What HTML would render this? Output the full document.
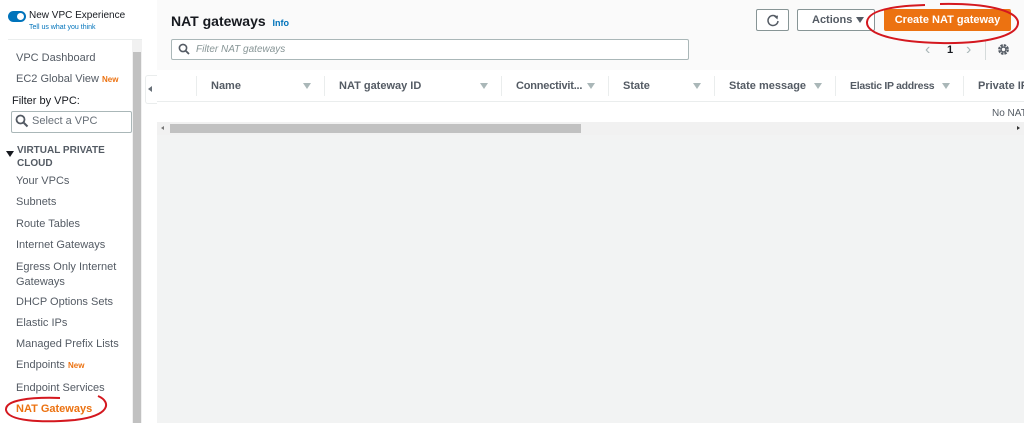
<!DOCTYPE html>
<html><head><meta charset="utf-8"><style>
*{box-sizing:border-box;margin:0;padding:0}
body{width:1024px;height:423px;overflow:hidden;background:#f2f3f3;font-family:"Liberation Sans",Arial,sans-serif;position:relative;color:#16191f}
.abs{position:absolute}
.side{left:0;top:0;width:142px;height:423px;background:#fff}
.nav{position:absolute;left:16px;font-size:11px;color:#545b64;white-space:nowrap}
.new{color:#ec7211;font-size:8px;font-weight:bold}
.th{position:absolute;top:80px;font-size:11px;font-weight:bold;color:#545b64;white-space:nowrap}
.tri{position:absolute;top:83px;width:0;height:0;border-left:4px solid transparent;border-right:4px solid transparent;border-top:6px solid #aab7b8}
.sep{position:absolute;top:76px;width:1px;height:20px;background:#eaeded}
</style></head><body>
<div class="abs side">
  <div class="abs" style="left:8px;top:11px;width:18px;height:11px;border-radius:6px;background:#0073bb"></div>
  <div class="abs" style="left:17px;top:13px;width:7px;height:7px;border-radius:50%;background:#fff"></div>
  <div class="abs" style="left:29px;top:10px;font-size:10px;color:#16191f">New VPC Experience</div>
  <div class="abs" style="left:29px;top:24px;font-size:7px;color:#0073bb">Tell us what you think</div>
  <div class="abs" style="left:8px;top:39px;width:150px;height:1px;background:#eaeded"></div>
  <div class="nav" style="top:52px">VPC Dashboard</div>
  <div class="nav" style="top:73px">EC2 Global View <span class="new">New</span></div>
  <div class="nav" style="left:12px;top:95px;color:#16191f">Filter by VPC:</div>
  <div class="abs" style="left:11px;top:111px;width:121px;height:22px;border:1px solid #aab7b8;border-radius:2px;background:#fff"></div>
  <svg class="abs" style="left:15px;top:114px" width="14" height="14"><circle cx="5.5" cy="5.5" r="4" fill="none" stroke="#545b64" stroke-width="1.8"/><line x1="8.5" y1="8.5" x2="12.5" y2="12.5" stroke="#545b64" stroke-width="2"/></svg>
  <div class="nav" style="left:32px;top:115px;font-size:11px;color:#687078">Select a VPC</div>
  <div class="abs" style="left:6px;top:151px;width:0;height:0;border-left:4px solid transparent;border-right:4px solid transparent;border-top:6px solid #16191f"></div>
  <div class="abs" style="left:17px;top:144px;font-size:10px;font-weight:bold;color:#545b64;line-height:13px">VIRTUAL PRIVATE<br>CLOUD</div>
  <div class="nav" style="top:175px">Your VPCs</div>
  <div class="nav" style="top:196px">Subnets</div>
  <div class="nav" style="top:218px">Route Tables</div>
  <div class="nav" style="top:239px">Internet Gateways</div>
  <div class="nav" style="top:260px;line-height:15px">Egress Only Internet<br>Gateways</div>
  <div class="nav" style="top:296px">DHCP Options Sets</div>
  <div class="nav" style="top:317px">Elastic IPs</div>
  <div class="nav" style="top:338px">Managed Prefix Lists</div>
  <div class="nav" style="top:359px">Endpoints <span class="new">New</span></div>
  <div class="nav" style="top:382px">Endpoint Services</div>
  <div class="nav" style="top:403px;color:#ec7211;font-weight:bold">NAT Gateways</div>
</div>
<div class="abs" style="left:132px;top:40px;width:10px;height:383px;background:#f1f1f1"></div>
<div class="abs" style="left:133px;top:52px;width:8px;height:371px;background:#c1c1c1"></div>
<div class="abs" style="left:142px;top:0;width:15px;height:423px;background:#fff"></div>
<div class="abs" style="left:145px;top:75px;width:13px;height:29px;background:#fff;border:1px solid #eaeded;border-right:none;border-radius:3px 0 0 3px"></div>
<div class="abs" style="left:148px;top:86px;border-top:3px solid transparent;border-bottom:3px solid transparent;border-right:4px solid #687078"></div>
<!-- main header -->
<div class="abs" style="left:157px;top:0;width:867px;height:70px;background:#fafafa"></div>
<div class="abs" style="left:171px;top:13px;font-size:14px;font-weight:bold">NAT gateways <span style="font-size:9px;color:#0073bb;margin-left:3px">Info</span></div>
<div class="abs" style="left:171px;top:39px;width:518px;height:21px;border:1px solid #aab7b8;border-radius:2px;background:#fff"></div>
<svg class="abs" style="left:178px;top:43px" width="13" height="13"><circle cx="5" cy="5" r="3.6" fill="none" stroke="#545b64" stroke-width="1.6"/><line x1="7.7" y1="7.7" x2="11" y2="11" stroke="#545b64" stroke-width="1.8"/></svg>
<div class="abs" style="left:196px;top:44px;font-size:10px;font-style:italic;color:#879596">Filter NAT gateways</div>
<!-- buttons -->
<div class="abs" style="left:756px;top:9px;width:33px;height:22px;border:1px solid #879596;border-radius:2px;background:#fff"></div>
<svg class="abs" style="left:766px;top:13px" width="14" height="14"><path d="M11 4.5A5 5 0 1 0 12 8" fill="none" stroke="#545b64" stroke-width="1.5"/><path d="M8 3.5L12 2.5L11.5 6.5Z" fill="#545b64"/></svg>
<div class="abs" style="left:797px;top:9px;width:78px;height:22px;border:1px solid #879596;border-radius:2px;background:#fff"></div>
<div class="abs" style="left:812px;top:14px;font-size:11px;font-weight:bold;color:#545b64">Actions</div>
<div class="abs" style="left:856px;top:17px;border-left:4px solid transparent;border-right:4px solid transparent;border-top:6px solid #545b64"></div>
<div class="abs" style="left:884px;top:9px;width:127px;height:22px;background:#ec7211;border-radius:2px"></div>
<div class="abs" style="left:884px;top:14px;width:127px;text-align:center;font-size:11px;font-weight:bold;color:#fff">Create NAT gateway</div>
<div class="abs" style="left:925px;top:41px;font-size:16px;color:#aab7b8">&#8249;</div>
<div class="abs" style="left:947px;top:44px;font-size:11px;font-weight:bold">1</div>
<div class="abs" style="left:966px;top:41px;font-size:16px;color:#aab7b8">&#8250;</div>
<div class="abs" style="left:985px;top:40px;width:1px;height:20px;background:#d5dbdb"></div>
<svg class="abs" style="left:997px;top:43px" width="13" height="13"><circle cx="6.5" cy="6.5" r="4.3" fill="none" stroke="#545b64" stroke-width="2.2" stroke-dasharray="2.4 1"/><circle cx="6.5" cy="6.5" r="2.4" fill="none" stroke="#545b64" stroke-width="1.4"/></svg>
<!-- table -->
<div class="abs" style="left:157px;top:70px;width:867px;height:52px;background:#fff"></div>
<div class="abs" style="left:157px;top:101px;width:867px;height:1px;background:#eaeded"></div>
<div class="sep" style="left:196px"></div>
<div class="th" style="left:211px">Name</div><div class="tri" style="left:303px"></div>
<div class="sep" style="left:324px"></div>
<div class="th" style="left:339px">NAT gateway ID</div><div class="tri" style="left:480px"></div>
<div class="sep" style="left:501px"></div>
<div class="th" style="left:516px;letter-spacing:-0.2px">Connectivit...</div><div class="tri" style="left:587px"></div>
<div class="sep" style="left:608px"></div>
<div class="th" style="left:623px">State</div><div class="tri" style="left:693px"></div>
<div class="sep" style="left:714px"></div>
<div class="th" style="left:729px">State message</div><div class="tri" style="left:814px"></div>
<div class="sep" style="left:835px"></div>
<div class="th" style="left:850px;font-size:10.5px;letter-spacing:-0.3px">Elastic IP address</div><div class="tri" style="left:942px"></div>
<div class="sep" style="left:963px"></div>
<div class="th" style="left:978px">Private IP</div>
<div class="abs" style="left:992px;top:108px;font-size:10px;color:#545b64;white-space:nowrap">No NAT</div>
<div class="abs" style="left:157px;top:122px;width:867px;height:13px;background:#f1f1f1"></div>
<div class="abs" style="left:170px;top:124px;width:411px;height:9px;background:#c1c1c1"></div>
<div class="abs" style="left:161px;top:126px;border-top:2px solid transparent;border-bottom:2px solid transparent;border-right:3px solid #777"></div>
<div class="abs" style="left:1017px;top:126px;border-top:2px solid transparent;border-bottom:2px solid transparent;border-left:3px solid #333"></div>
<!-- red annotations -->
<svg class="abs" style="left:0;top:0" width="1024" height="423">
<path d="M940 4C985 3 1016 10 1018 22C1019 36 985 44 940 43C895 42 866 34 867 22C868 11 890 6 925 5" fill="none" stroke="#d4181f" stroke-width="2"/>
<path d="M98 396C112 402 110 416 75 420C40 423 8 421 6 410C5 400 30 397 60 398" fill="none" stroke="#d4181f" stroke-width="2"/>
</svg>
</body></html>
